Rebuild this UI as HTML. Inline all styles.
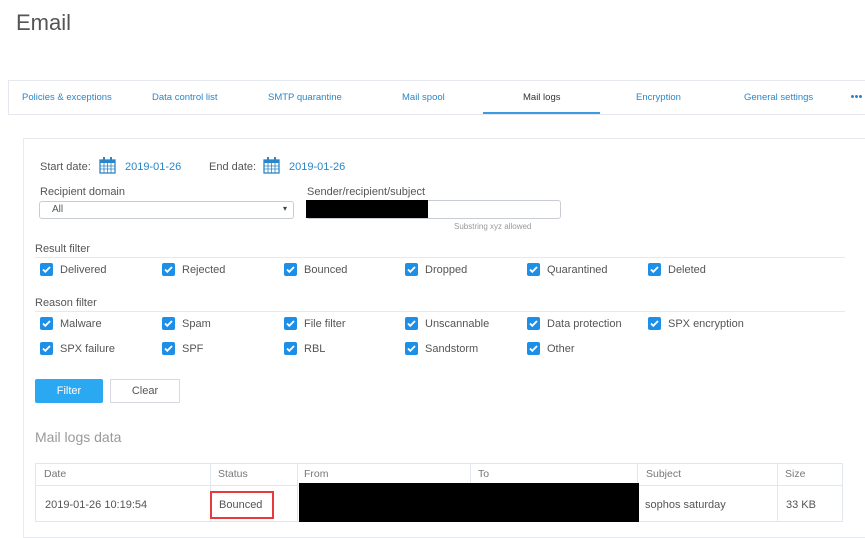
<!DOCTYPE html>
<html><head><meta charset="utf-8"><style>
*{margin:0;padding:0;box-sizing:border-box}
body{width:865px;height:533px;background:#fff;font-family:"Liberation Sans",sans-serif;position:relative;overflow:hidden;color:#555}
.a{position:absolute;white-space:nowrap}
.tab{position:absolute;top:92px;font-size:9.5px;color:#2a86c8}
.lbl{font-size:11px;color:#555}
.cb{position:absolute;width:13px;height:13px;background:#1d8fe6;border-radius:2px}
.cb svg{position:absolute;left:2px;top:2px}
.ct{position:absolute;font-size:11px;color:#555}
.th{position:absolute;top:468px;font-size:10.5px;color:#777}
.vl{position:absolute;top:463px;width:1px;height:59px;background:#e2e6ee}
.dot{position:absolute;top:95px;width:3px;height:3px;border-radius:50%;background:#2a86c8}
</style></head><body>
<div class="a" style="left:16px;top:10px;font-size:22px;color:#555">Email</div>

<div class="a" style="left:8px;top:80px;width:870px;height:35px;border:1px solid #e6e8ef"></div>
<div class="tab" style="left:22px">Policies &amp; exceptions</div>
<div class="tab" style="left:152px">Data control list</div>
<div class="tab" style="left:268px">SMTP quarantine</div>
<div class="tab" style="left:402px">Mail spool</div>
<div class="tab" style="left:523px;color:#333">Mail logs</div>
<div class="tab" style="left:636px">Encryption</div>
<div class="tab" style="left:744px">General settings</div>
<div class="dot" style="left:851px"></div><div class="dot" style="left:855px"></div><div class="dot" style="left:859px"></div>
<div class="a" style="left:483px;top:112px;width:117px;height:2px;background:#3a9be0"></div>

<div class="a" style="left:23px;top:138px;width:850px;height:400px;border:1px solid #e8eaf0"></div>

<div class="a lbl" style="left:40px;top:161px">Start date:</div>
<svg class="a" style="left:99px;top:157px" width="17" height="17" viewBox="0 0 17 17"><rect x="1" y="3" width="15" height="13" fill="#fff" stroke="#2a86c8" stroke-width="1.3"/><rect x="1" y="3" width="15" height="3" fill="#2a86c8"/><rect x="4" y="0" width="2" height="4" fill="#2a86c8"/><rect x="11" y="0" width="2" height="4" fill="#2a86c8"/><path d="M1 9h15M1 12h15M5 6v10M8.5 6v10M12 6v10" stroke="#2a86c8" stroke-width="0.8"/></svg>
<div class="a" style="left:125px;top:161px;font-size:11px;color:#2a86c8">2019-01-26</div>
<div class="a lbl" style="left:209px;top:161px">End date:</div>
<svg class="a" style="left:263px;top:157px" width="17" height="17" viewBox="0 0 17 17"><rect x="1" y="3" width="15" height="13" fill="#fff" stroke="#2a86c8" stroke-width="1.3"/><rect x="1" y="3" width="15" height="3" fill="#2a86c8"/><rect x="4" y="0" width="2" height="4" fill="#2a86c8"/><rect x="11" y="0" width="2" height="4" fill="#2a86c8"/><path d="M1 9h15M1 12h15M5 6v10M8.5 6v10M12 6v10" stroke="#2a86c8" stroke-width="0.8"/></svg>
<div class="a" style="left:289px;top:161px;font-size:11px;color:#2a86c8">2019-01-26</div>

<div class="a lbl" style="left:40px;top:186px">Recipient domain</div>
<div class="a" style="left:39px;top:201px;width:255px;height:18px;border:1px solid #c8ccd4;border-radius:3px"></div>
<div class="a" style="left:52px;top:204px;font-size:10px;color:#555">All</div>
<div class="a" style="left:283px;top:204px;font-size:8px;color:#444">▾</div>
<div class="a lbl" style="left:307px;top:186px">Sender/recipient/subject</div>
<div class="a" style="left:306px;top:200px;width:255px;height:19px;border:1px solid #c8ccd4;border-radius:3px"></div>
<div class="a" style="left:306px;top:200px;width:122px;height:18px;background:#000"></div>
<div class="a" style="left:454px;top:222px;font-size:8px;color:#999">Substring xyz allowed</div>

<div class="a lbl" style="left:35px;top:243px">Result filter</div>
<div class="a" style="left:35px;top:257px;width:810px;height:1px;background:#e6e8f0"></div>
<div class="a lbl" style="left:35px;top:297px">Reason filter</div>
<div class="a" style="left:35px;top:311px;width:810px;height:1px;background:#e6e8f0"></div>

<div id="cbs"></div>

<div class="a" style="left:35px;top:379px;width:68px;height:24px;background:#2aa8f2;border-radius:2px;color:#fff;font-size:11px;text-align:center;line-height:24px">Filter</div>
<div class="a" style="left:110px;top:379px;width:70px;height:24px;border:1px solid #d6d9e0;color:#555;font-size:11px;text-align:center;line-height:22px">Clear</div>

<div class="a" style="left:35px;top:429px;font-size:14px;color:#999">Mail logs data</div>

<div class="a" style="left:35px;top:463px;width:808px;height:59px;border:1px solid #e2e6ee"></div>
<div class="a" style="left:35px;top:485px;width:808px;height:1px;background:#e2e6ee"></div>
<div class="vl" style="left:210px"></div><div class="vl" style="left:297px"></div><div class="vl" style="left:470px"></div><div class="vl" style="left:637px"></div><div class="vl" style="left:777px"></div>
<div class="th" style="left:44px">Date</div>
<div class="th" style="left:218px">Status</div>
<div class="th" style="left:304px">From</div>
<div class="th" style="left:478px">To</div>
<div class="th" style="left:646px">Subject</div>
<div class="th" style="left:785px">Size</div>
<div class="a" style="left:45px;top:499px;font-size:11px;color:#555">2019-01-26 10:19:54</div>
<div class="a" style="left:219px;top:499px;font-size:11px;color:#555">Bounced</div>
<div class="a" style="left:210px;top:491px;width:64px;height:28px;border:2px solid #e83a3a"></div>
<div class="a" style="left:299px;top:483px;width:340px;height:39px;background:#000"></div>
<div class="a" style="left:645px;top:499px;font-size:11px;color:#555">sophos saturday</div>
<div class="a" style="left:786px;top:499px;font-size:11px;color:#555">33 KB</div>

<script>
var xs=[40,162,284,405,527,648];
var rows=[[263,["Delivered","Rejected","Bounced","Dropped","Quarantined","Deleted"]],[317,["Malware","Spam","File filter","Unscannable","Data protection","SPX encryption"]],[342,["SPX failure","SPF","RBL","Sandstorm","Other"]]];
var h="";
rows.forEach(function(r){r[1].forEach(function(t,i){
h+='<div class="cb" style="left:'+xs[i]+'px;top:'+r[0]+'px"><svg width="9" height="9" viewBox="0 0 9 9"><path d="M1 4.5l2.3 2.3L8 2" stroke="#fff" stroke-width="1.8" fill="none"/></svg></div>';
h+='<div class="ct" style="left:'+(xs[i]+20)+'px;top:'+(r[0]+1)+'px">'+t+'</div>';});});
document.getElementById("cbs").innerHTML=h;
</script>
</body></html>
